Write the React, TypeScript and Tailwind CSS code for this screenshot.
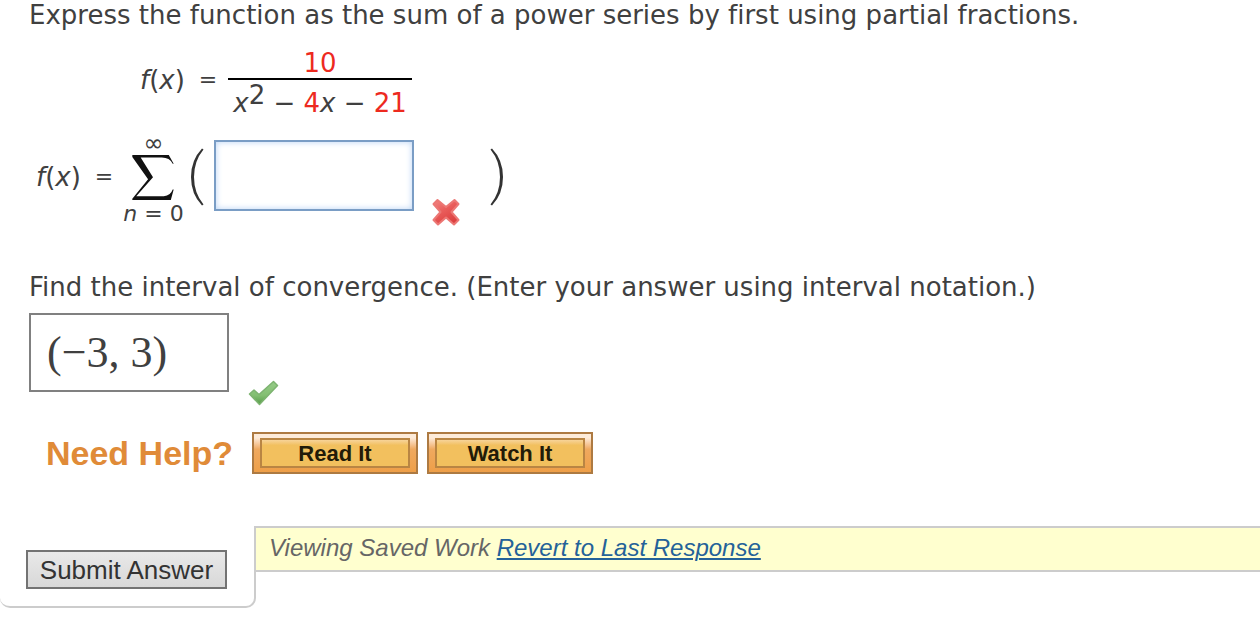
import React from "react";

function Fx() {
  return (
    <span className="whitespace-nowrap">
      <i>f</i>(<i>x</i>)
    </span>
  );
}

function Paren({ flip = false }: { flip?: boolean }) {
  return (
    <svg
      viewBox="0 0 14 58"
      className={flip ? "h-[58px] w-[14px] -scale-x-100" : "h-[58px] w-[14px]"}
      aria-hidden="true"
    >
      <path d="M12 .5Q1 12 1 29T12 57.5L13.5 56.5Q4 45 4 29T13.5 1.5Z" fill="#333" />
    </svg>
  );
}

function Sigma() {
  return (
    <svg viewBox="0 0 44 46" className="h-[46px] w-[44px]" role="img" aria-label="sum">
      <path
        d="M1 0H38L43 9H42Q39 2.500 31 2.500H9.500L22 22.500L5 42H33Q40 41 42 35H43L40 46H1V44.500L17 24.500L1 2Z"
        fill="#111"
      />
    </svg>
  );
}

function Cross() {
  return (
    <svg viewBox="0 0 28 28" className="h-[28px] w-[28px]" role="img" aria-label="Incorrect">
      <defs>
        <linearGradient id="cross" x1="0" y1="0" x2="0.6" y2="1">
          <stop offset="0" stopColor="#f08683" />
          <stop offset="0.5" stopColor="#e95c5a" />
          <stop offset="1" stopColor="#dc4040" />
        </linearGradient>
      </defs>
      <path
        d="M5.500 2L14 9L22.500 2L26.500 6L19.500 14L26.500 22L22 26.500L14 19.500L6 26.500L1.500 22L8.500 14L1.500 6Z"
        fill="url(#cross)"
        stroke="#ec7774"
        strokeWidth="2"
        strokeLinejoin="round"
      />
    </svg>
  );
}

function Check() {
  return (
    <svg viewBox="0 0 32 26" className="h-[26px] w-[32px]" role="img" aria-label="Correct">
      <defs>
        <linearGradient id="check" x1="0" y1="0" x2="0" y2="1">
          <stop offset="0" stopColor="#96cb88" />
          <stop offset="0.6" stopColor="#83bf72" />
          <stop offset="1" stopColor="#569b49" />
        </linearGradient>
      </defs>
      <path
        d="M1.500 14L6 10L11 14.500L25.500 1.500L29.500 5.500L11.500 24.500Z"
        fill="url(#check)"
        stroke="#7db370"
        strokeWidth="1.500"
        strokeLinejoin="round"
      />
    </svg>
  );
}

function HelpButton({ children }: { children: React.ReactNode }) {
  return (
    <button
      type="button"
      className="h-[42px] w-[166px] border-2 border-[#ad7a42] bg-linear-to-b from-[#fdebd9] from-10% via-[#efa95f] via-40% to-[#ee9f48] px-[6px] py-1"
    >
      <span className="flex h-full items-center justify-center border-2 border-[#b98543] bg-[#f2c05e] bg-linear-to-b from-[#f7d398] to-[#f2c05e] to-20% pt-[2px] text-[22px] font-bold text-[#221b08]">
        {children}
      </span>
    </button>
  );
}

export default function App() {
  return (
    <main className="overflow-hidden bg-white font-['DejaVu_Sans',Verdana,sans-serif] text-[26px] leading-[30px] text-[#404040] [font-variant-ligatures:none]">
      <section className="pl-[29px]">
        <p>Express the function as the sum of a power series by first using partial fractions.</p>

        <div className="mt-[18px] flex pl-[111px]">
          <div className="flex gap-[14px] pt-[17px]">
            <Fx />
            <span className="text-[22px]">=</span>
          </div>
          <div className="ml-[11px] text-center">
            <div className="border-b-2 border-black text-[#ed2a1f]">10</div>
            <div className="px-[5px] pt-2 whitespace-nowrap">
              <i>x</i>
              <sup className="top-[-8px] text-[26px]">2</sup> − <span className="text-[#ed2a1f]">4</span>
              <i>x</i> − <span className="text-[#ed2a1f]">21</span>
            </div>
          </div>
        </div>

        <div className="mt-[17px] flex h-[93px] pl-[7px]">
          <div className="flex gap-[14px] pt-[27px]">
            <Fx />
            <span className="text-[22px]">=</span>
          </div>
          <div className="ml-[10px] flex flex-col items-center">
            <span className="h-5 text-[24px] leading-4">∞</span>
            <Sigma />
            <span className="text-[22px] leading-[28px] whitespace-nowrap">
              <i>n</i> = 0
            </span>
          </div>
          <div className="ml-[6px] pt-[13px]">
            <Paren />
          </div>
          <input
            type="text"
            aria-label="Power series term"
            className="mt-[5px] ml-[10px] h-[71px] w-[200px] border-2 border-[#7a9dc5] px-4 shadow-[inset_0_0_6px_#b9d3f5] outline-none"
          />
          <div className="ml-[18px] pt-[63px]">
            <Cross />
          </div>
          <div className="ml-[30px] pt-[13px]">
            <Paren flip />
          </div>
        </div>

        <label htmlFor="interval" className="mt-[44px] block">
          Find the interval of convergence. (Enter your answer using interval notation.)
        </label>
        <div className="mt-[11px] flex">
          <input
            id="interval"
            type="text"
            defaultValue="(−3, 3)"
            className="h-[79px] w-[200px] border-2 border-[#808080] px-4 font-['Liberation_Serif',serif] text-[44px] outline-none"
          />
          <div className="ml-[19px] pt-[67px]">
            <Check />
          </div>
        </div>
      </section>

      <section className="mt-[26px] flex items-center pl-[46px] font-['Liberation_Sans',Arial,sans-serif]">
        <h2 className="w-[206px] text-[34px] font-bold text-[#e08b38]">Need Help?</h2>
        <div className="flex gap-[9px]">
          <HelpButton>Read It</HelpButton>
          <HelpButton>Watch It</HelpButton>
        </div>
      </section>

      <footer className="mt-[52px] flex items-start font-['Liberation_Sans',Arial,sans-serif]">
        <div className="w-[256px] rounded-b-[10px] border-r-2 border-b-2 border-[#ccc] pt-6 pb-[17px] pl-[26px]">
          <button
            type="button"
            className="block h-[39px] w-[201px] border-2 border-[#737373] bg-linear-to-b from-[#e9e9e9] to-[#d8d8d8] text-[26px] whitespace-nowrap text-[#333]"
          >
            Submit Answer
          </button>
        </div>
        <p className="flex-1 border-y-2 border-[#ccc] bg-[#ffffcf] pt-[5px] pb-[7px] pl-[13px] text-[24px] text-[#666] italic">
          Viewing Saved Work{" "}
          <a href="#revert" className="text-[#246299] underline decoration-2 underline-offset-2">
            Revert to Last Response
          </a>
        </p>
      </footer>
    </main>
  );
}
